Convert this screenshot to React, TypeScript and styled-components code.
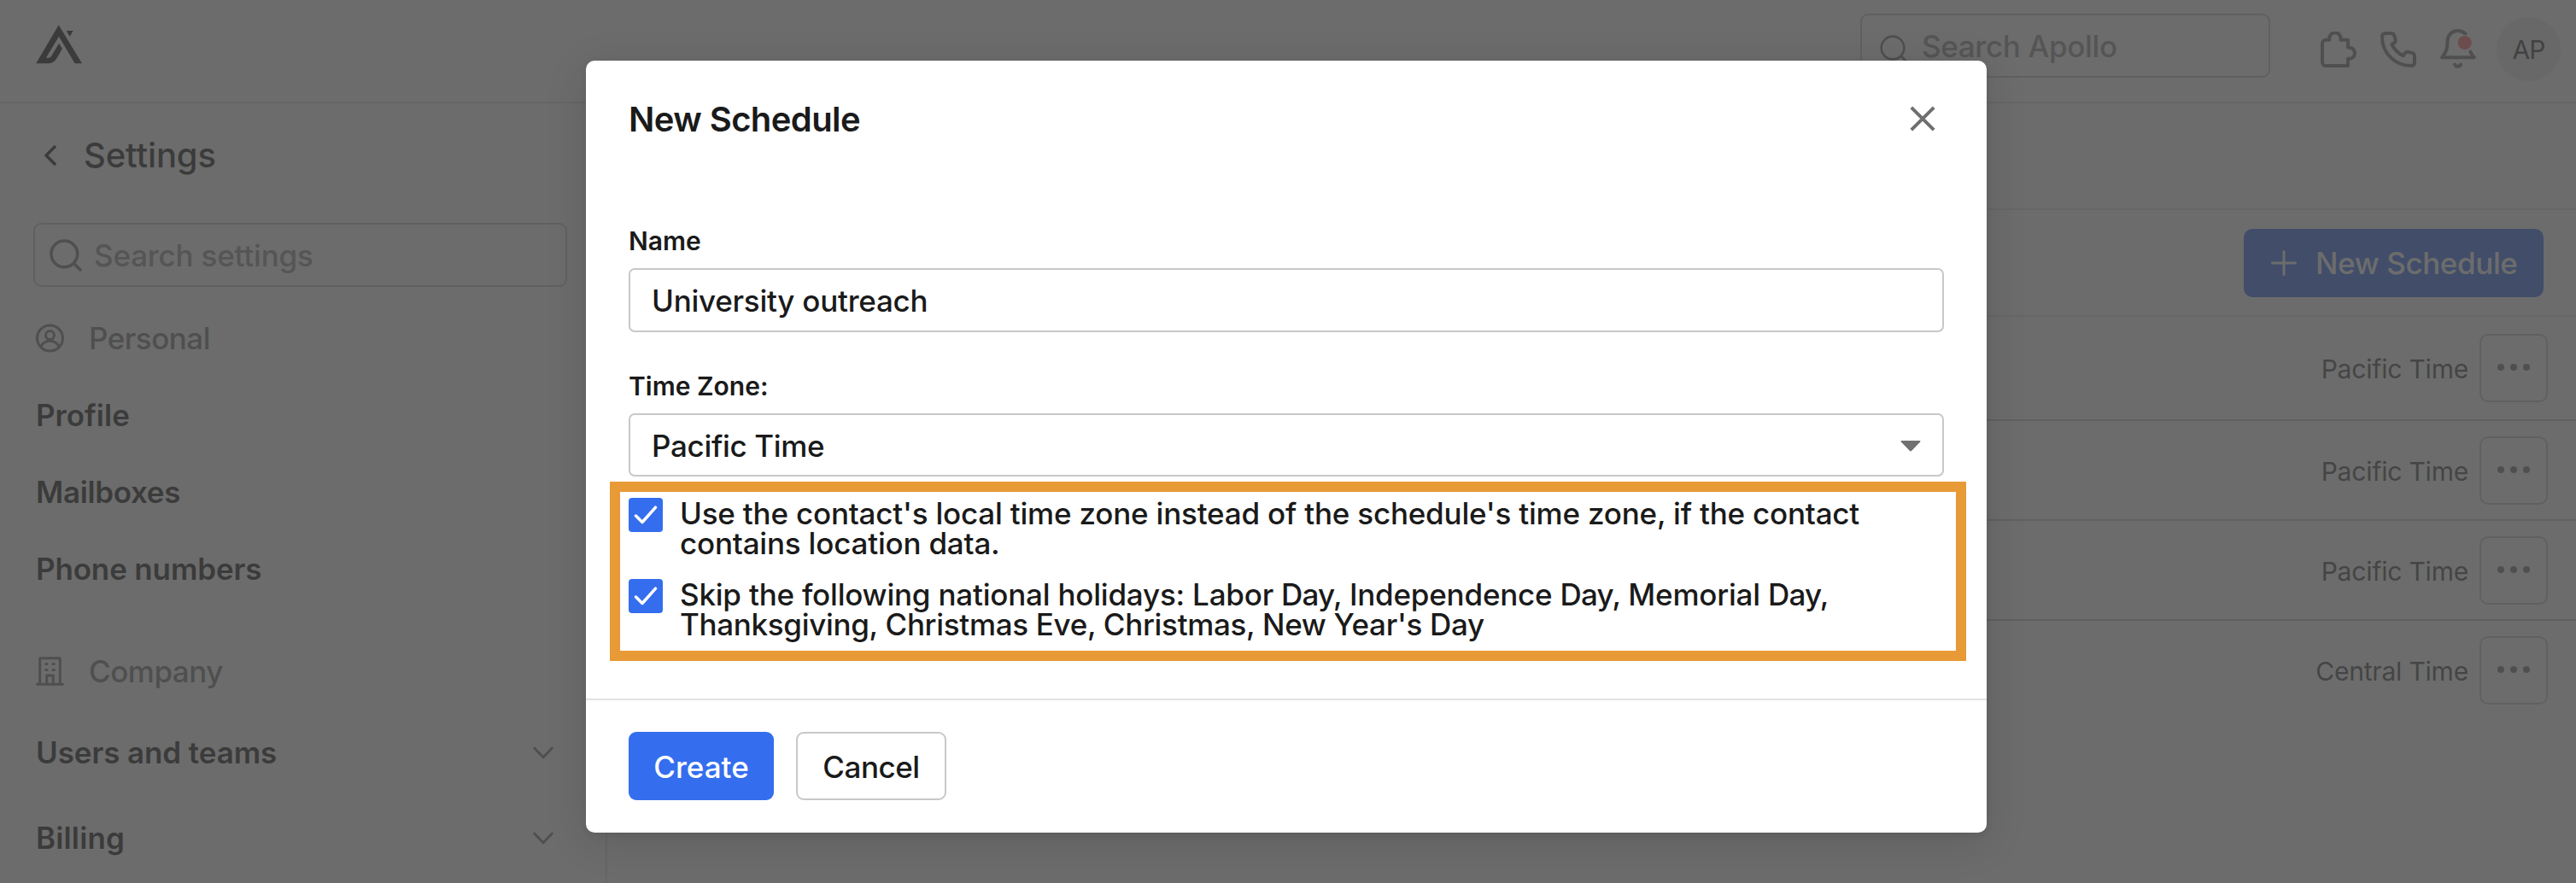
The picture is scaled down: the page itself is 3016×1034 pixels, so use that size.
import React from "react";
import styled, { createGlobalStyle } from "styled-components";

const GlobalStyle = createGlobalStyle`
  *, *::before, *::after { box-sizing: border-box; }
  body { margin: 0; background: #ffffff; }
  button, input { font-family: inherit; margin: 0; }
`;

const ink = "#1a1a1a";
const muted = "#777777";
const line = "#e2e2e2";
const fieldLine = "#c8c8c8";
const blue = "#346eee";

/* ---------- Page shell ---------- */

const Page = styled.div`
  position: relative;
  height: 1034px;
  overflow: hidden;
  display: flex;
  flex-direction: column;
  background: #ffffff;
  color: ${ink};
  font-family: Inter, "Liberation Sans", sans-serif;
  font-size: 35px;
  font-weight: 500;
`;

const TopBar = styled.header`
  flex: none;
  height: 121px;
  padding: 16px 18px 0 42px;
  display: flex;
  align-items: flex-start;
  border-bottom: 2px solid ${line};
`;

const Logo = styled.svg`
  display: block;
  margin: 13px auto 0 0;
`;

const SearchBox = styled.label<{ $pad: number; $gap: number }>`
  display: flex;
  align-items: center;
  gap: ${(p) => p.$gap}px;
  height: 75px;
  padding-left: ${(p) => p.$pad}px;
  border: 2px solid ${fieldLine};
  border-radius: 9px;
  color: ${muted};
`;

const GlobalSearch = styled(SearchBox)`
  width: 480px;
  margin-right: 59px;

  svg { margin-top: 7px; }
`;

const Placeholder = styled.span<{ $track: number }>`
  color: #919191;
  letter-spacing: ${(p) => p.$track}px;
`;

const TopActions = styled.nav`
  display: flex;
  align-items: center;
  gap: 28px;
  height: 75px;
  margin: 4px 24px 0 0;
  color: ${muted};
`;

const Avatar = styled.div`
  display: grid;
  place-items: center;
  width: 75px;
  height: 75px;
  margin-top: 4px;
  padding-top: 1px;
  border-radius: 50%;
  background: #eaeaea;
  color: #3a3a3a;
  font-size: 30px;
  font-weight: 400;
  letter-spacing: -1px;
`;

const Body = styled.div`
  flex: 1;
  display: flex;
`;

/* ---------- Sidebar ---------- */

const Sidebar = styled.aside`
  flex: none;
  width: 711px;
  padding: 36px 45px 0 39px;
  border-right: 2px solid ${line};
`;

const SidebarTitle = styled.div`
  display: flex;
  align-items: center;
  gap: 32px;
  height: 49px;
  padding-left: 13px;
  margin-bottom: 55px;
  font-size: 40px;
  line-height: 49px;
  letter-spacing: -0.13px;
`;

const Section = styled.div<{ $top: number }>`
  display: flex;
  align-items: center;
  gap: 29px;
  height: 50px;
  margin: ${(p) => p.$top}px 0 20px;
  padding-left: 3px;
  color: ${muted};
  letter-spacing: -0.5px;
`;

const NavItem = styled.a<{ $height: number; $track?: number }>`
  display: flex;
  align-items: center;
  justify-content: space-between;
  height: ${(p) => p.$height}px;
  padding: 0 16px 0 3px;
  font-weight: 600;
  letter-spacing: ${(p) => p.$track ?? -0.1}px;

  svg { color: ${muted}; }
`;

/* ---------- Main column ---------- */

const Main = styled.main`
  flex: 1;
`;

const TabStrip = styled.div`
  height: 125px;
  border-bottom: 2px solid ${line};
`;

const Toolbar = styled.div`
  display: flex;
  justify-content: flex-end;
  height: 125px;
  padding: 22px 38px 0 0;
  border-bottom: 2px solid ${line};
`;

const NewButton = styled.button`
  display: flex;
  align-items: center;
  gap: 22px;
  width: 351px;
  height: 80px;
  padding: 0 0 0 32px;
  border: 0;
  border-radius: 10px;
  background: ${blue};
  color: #ffffff;
  font-size: 35px;
  font-weight: 500;
  letter-spacing: -0.4px;
`;

const ScheduleRow = styled.div<{ $height: number; $inset: number; $last: boolean }>`
  display: flex;
  align-items: center;
  justify-content: flex-end;
  gap: 13px;
  height: ${(p) => p.$height}px;
  padding: ${(p) => p.$inset}px 33px 0 0;
  border-bottom: ${(p) => (p.$last ? "0" : `2px solid ${fieldLine}`)};
`;

const Zone = styled.span`
  padding-top: 1px;
  color: #474747;
  font-size: 30px;
  font-weight: 400;
  letter-spacing: -0.2px;
`;

const MoreButton = styled.button`
  display: flex;
  align-items: center;
  justify-content: center;
  gap: 7px;
  width: 80px;
  height: 80px;
  padding: 0 0 2px;
  border: 2px solid ${fieldLine};
  border-radius: 10px;
  background: transparent;
`;

const Dot = styled.i`
  width: 8px;
  height: 8px;
  border-radius: 50%;
  background: ${muted};
`;

/* ---------- Dialog ---------- */

const Backdrop = styled.div`
  position: absolute;
  inset: 0;
  display: flex;
  align-items: flex-start;
  justify-content: center;
  padding: 71px 4px 0 0;
  background: rgba(69, 69, 69, 0.79);
`;

const Dialog = styled.section`
  width: 1640px;
  height: 904px;
  border-radius: 10px;
  background: #ffffff;
  box-shadow: 0 10px 50px rgba(0, 0, 0, 0.12), 0 2px 8px rgba(0, 0, 0, 0.08);
`;

const DialogHeader = styled.div`
  display: flex;
  justify-content: space-between;
  align-items: center;
  height: 191px;
  padding: 0 60px 53px 50px;
`;

const DialogTitle = styled.h2`
  margin: 0;
  font-size: 40px;
  font-weight: 600;
  line-height: 50px;
  letter-spacing: -0.59px;
`;

const CloseIcon = styled.svg`
  display: block;
  margin-bottom: 3px;
  color: #6f6f6f;
`;

const Form = styled.div`
  height: 556px;
  padding: 0 50px;
`;

const Label = styled.div`
  margin-bottom: 12px;
  font-size: 30px;
  font-weight: 600;
  line-height: 40px;
`;

const Field = styled.div<{ $height: number; $track: number }>`
  display: flex;
  align-items: center;
  justify-content: space-between;
  height: ${(p) => p.$height}px;
  padding: 1px 25px 0 25px;
  border: 2px solid ${fieldLine};
  border-radius: 7px;
  letter-spacing: ${(p) => p.$track}px;
`;

const NameGroup = styled.div`
  margin-bottom: 43px;
`;

const Highlight = styled.div`
  display: flex;
  flex-direction: column;
  gap: 25px;
  height: 210px;
  margin: 6px -26px 0 -22px;
  padding: 7px 10px 0;
  border: 12px solid #e89a36;
`;

const Option = styled.div`
  display: flex;
  align-items: flex-start;
  gap: 20px;
  height: 70px;
`;

const CheckBox = styled.span`
  flex: none;
  display: grid;
  place-items: center;
  width: 40px;
  height: 40px;
  border-radius: 4px;
  background: ${blue};
  color: #ffffff;
`;

const OptionText = styled.span`
  padding-top: 1px;
`;

const OptionLine = styled.span<{ $track: number }>`
  display: block;
  line-height: 35px;
  white-space: nowrap;
  letter-spacing: ${(p) => p.$track}px;
`;

const Tight = styled.span`
  letter-spacing: -0.8px;
`;

const DialogFooter = styled.div`
  display: flex;
  gap: 26px;
  padding: 37px 50px 0;
  border-top: 2px solid #e2e2e2;
`;

const Action = styled.button<{ $primary?: boolean }>`
  width: ${(p) => (p.$primary ? 170 : 176)}px;
  height: 80px;
  padding: 1px 0 0;
  border: ${(p) => (p.$primary ? "0" : `2px solid ${fieldLine}`)};
  border-radius: 9px;
  background: ${(p) => (p.$primary ? blue : "#ffffff")};
  color: ${(p) => (p.$primary ? "#ffffff" : ink)};
  font-size: 35px;
  font-weight: 500;
  letter-spacing: ${(p) => (p.$primary ? 0 : -0.45)}px;
`;

/* ---------- Icons ---------- */

const strokeProps = {
  fill: "none",
  stroke: "currentColor",
  strokeLinecap: "round" as const,
  strokeLinejoin: "round" as const,
};

const ApolloLogo = () => (
  <Logo width="55" height="46" viewBox="0 0 55 46" fill={ink}>
    <path
      fillRule="evenodd"
      d="M26.7.3 54 45.3H45.6L27 13.7 11.9 38.7H15.3Q17.3 38.3 18.7 35.8L27 21.7 30.9 28 24.3 39.6Q20.8 45.3 15.3 45.3H.2Z"
    />
    <path d="M35.7 7h8l-4 6.8z" />
  </Logo>
);

const SearchIcon = ({ size, width }: { size: number; width: number }) => (
  <svg width={size} height={size} viewBox="0 0 38 38" {...strokeProps} strokeWidth={width}>
    <circle cx="17.3" cy="17.3" r="15.4" />
    <path d="M28.5 28.5 36 36" />
  </svg>
);

const PuzzleIcon = () => (
  <svg width="42" height="42" viewBox="0 0 42 42" {...strokeProps} strokeWidth="4">
    <path d="M6 9.8h4.2V8a6.7 6.7 0 0 1 13.4 0v1.8H32v8.8h1.4a6.6 6.6 0 0 1 0 13.2H32V40H6a4 4 0 0 1-4-4V13.8a4 4 0 0 1 4-4z" />
  </svg>
);

const PhoneIcon = () => (
  <svg width="42" height="42" viewBox="0 0 42 42" {...strokeProps} strokeWidth="4">
    <path d="M2 6C2 3.5 3.5 2 6 2h6.5c2 0 3.3 1 3.8 2.8L17.6 9c.5 1.8.1 3-1.3 4L13.4 15c2.8 5.7 7.5 10.5 13.2 13.3l2.2-3c1-1.4 2.3-1.8 4-1.4l4.2 1C39 25.4 40 26.8 40 28.7V36c0 2.500-1.500 4-4 4C17 40 2 25 2 6z" />
  </svg>
);

const BellIcon = () => (
  <svg width="42" height="48" viewBox="0 0 42 48" {...strokeProps} strokeWidth="4">
    <path d="M29.5 5.4C27.200 3.300 24 2 20.500 2 13.500 2 8.500 7.400 8.500 14c0 8-1 12.500-6.300 19.300H39.800C37.700 30.800 36.200 28.600 35.300 26.500" />
    <path d="M17.200 41.600c1.500 3 5.300 3 6.800 0" />
    <circle cx="28.7" cy="16" r="8" fill="#ff6a6a" stroke="none" />
  </svg>
);

const PersonIcon = () => (
  <svg width="33" height="34" viewBox="0 0 33 34" {...strokeProps} strokeWidth="3">
    <circle cx="16.5" cy="17" r="15" />
    <circle cx="16.5" cy="13.6" r="5" />
    <path d="M5.6 27C8 22.5 12 20.2 16.5 20.2S25 22.5 27.4 27" />
  </svg>
);

const BuildingIcon = () => (
  <svg width="33" height="34" viewBox="0 0 33 34" {...strokeProps} strokeWidth="3">
    <path d="M1.5 32.3h30M4.7 32V1.7h23.6V32M12.7 32V22h7.6v10" />
    <path d="M11.7 8.6h1.4M20 8.6h1.4M11.7 15.4h1.4M20 15.4h1.4" />
  </svg>
);

const ChevronDown = () => (
  <svg width="24" height="15" viewBox="0 0 24 15" {...strokeProps} strokeWidth="3">
    <path d="M1.8 2.2 12 12.8 22.2 2.2" />
  </svg>
);

const ChevronLeft = () => (
  <svg width="14" height="24" viewBox="0 0 14 24" {...strokeProps} strokeWidth="3.5">
    <path d="M12 2 2 12l10 10" />
  </svg>
);

const PlusIcon = () => (
  <svg width="30" height="30" viewBox="0 0 30 30" {...strokeProps} strokeWidth="3">
    <path d="M15 1.5v27M1.5 15h27" />
  </svg>
);

const CheckIcon = () => (
  <svg width="28" height="24" viewBox="0 0 28 24" {...strokeProps} strokeWidth="3.5">
    <path d="M2.5 13 10 20.5 25.5 3.2" />
  </svg>
);

const CaretIcon = () => (
  <svg width="24" height="14" viewBox="0 0 24 14" fill="#717171">
    <path d="M1.5 1h21c.9 0 1.300 .9 .7 1.600L13 13.100c-.6 .6-1.400 .6-2 0L.8 2.600C.2 1.900 .6 1 1.500 1z" />
  </svg>
);

/* ---------- Data ---------- */

const schedules = [
  { zone: "Pacific Time", height: 122, inset: 0 },
  { zone: "Pacific Time", height: 117, inset: 1 },
  { zone: "Pacific Time", height: 117, inset: 1 },
  { zone: "Central Time", height: 115, inset: 1 },
];

export default function App() {
  return (
    <Page>
      <GlobalStyle />
      <TopBar>
        <ApolloLogo />
        <GlobalSearch $pad={21} $gap={16}>
          <SearchIcon size={33} width={3} />
          <Placeholder $track={-0.34}>Search Apollo</Placeholder>
        </GlobalSearch>
        <TopActions>
          <PuzzleIcon />
          <PhoneIcon />
          <BellIcon />
        </TopActions>
        <Avatar>AP</Avatar>
      </TopBar>

      <Body>
        <Sidebar>
          <SidebarTitle>
            <ChevronLeft />
            Settings
          </SidebarTitle>
          <SearchBox $pad={17} $gap={14}>
            <SearchIcon size={38} width={3.5} />
            <Placeholder $track={-0.19}>Search settings</Placeholder>
          </SearchBox>
          <Section $top={35}>
            <PersonIcon />
            Personal
          </Section>
          <NavItem $height={90} $track={0}>Profile</NavItem>
          <NavItem $height={90} $track={-0.35}>Mailboxes</NavItem>
          <NavItem $height={90} $track={-0.15}>Phone numbers</NavItem>
          <Section $top={50}>
            <BuildingIcon />
            Company
          </Section>
          <NavItem $height={100}>
            Users and teams
            <ChevronDown />
          </NavItem>
          <NavItem $height={100} $track={0.15}>
            Billing
            <ChevronDown />
          </NavItem>
        </Sidebar>

        <Main>
          <TabStrip />
          <Toolbar>
            <NewButton>
              <PlusIcon />
              New Schedule
            </NewButton>
          </Toolbar>
          {schedules.map((s, i) => (
            <ScheduleRow key={i} $height={s.height} $inset={s.inset} $last={i === schedules.length - 1}>
              <Zone>{s.zone}</Zone>
              <MoreButton aria-label="More">
                <Dot />
                <Dot />
                <Dot />
              </MoreButton>
            </ScheduleRow>
          ))}
        </Main>
      </Body>

      <Backdrop>
        <Dialog role="dialog">
          <DialogHeader>
            <DialogTitle>New Schedule</DialogTitle>
            <CloseIcon width="30" height="30" viewBox="0 0 30 30" fill="none" stroke="currentColor" strokeWidth="4">
              <path d="M1.8 1.8 28.2 28.2M28.2 1.8 1.8 28.2" />
            </CloseIcon>
          </DialogHeader>
          <Form>
            <NameGroup>
              <Label>Name</Label>
              <Field $height={75} $track={-0.25}>University outreach</Field>
            </NameGroup>
            <Label>Time Zone:</Label>
            <Field $height={74} $track={-0.33}>
              Pacific Time
              <CaretIcon />
            </Field>
            <Highlight>
              <Option>
                <CheckBox><CheckIcon /></CheckBox>
                <OptionText>
                  <OptionLine $track={-0.2}>
                    Use the contact's local time zone instead of the schedule's time zone, if the contact
                  </OptionLine>
                  <OptionLine $track={-0.2}>contains location data.</OptionLine>
                </OptionText>
              </Option>
              <Option>
                <CheckBox><CheckIcon /></CheckBox>
                <OptionText>
                  <OptionLine $track={-0.21}>
                    Skip the following national holidays: Labor <Tight>Day,</Tight> Independence{" "}
                    <Tight>Day,</Tight> Memorial <Tight>Day,</Tight>
                  </OptionLine>
                  <OptionLine $track={-0.32}>
                    Thanksgiving, Christmas Eve, Christmas, New Year's Day
                  </OptionLine>
                </OptionText>
              </Option>
            </Highlight>
          </Form>
          <DialogFooter>
            <Action $primary>Create</Action>
            <Action>Cancel</Action>
          </DialogFooter>
        </Dialog>
      </Backdrop>
    </Page>
  );
}
